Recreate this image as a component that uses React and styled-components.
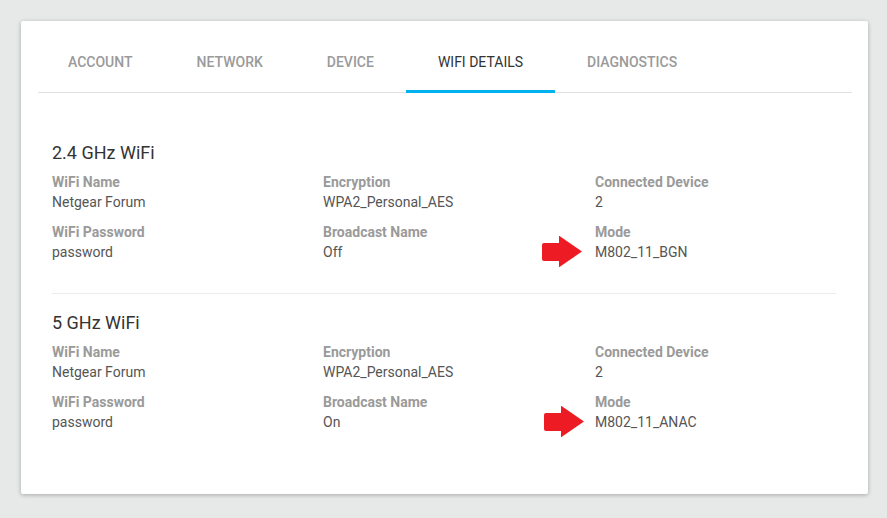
import styled, { createGlobalStyle } from "styled-components"

const GlobalStyle = createGlobalStyle`
    html, body {
        margin: 0;
        padding: 0;
        background-color: #e7e9e8;
        font-family: Roboto, "Liberation Sans", sans-serif;
    }
`

const tabs = ['ACCOUNT', 'NETWORK', 'DEVICE', 'WIFI DETAILS', 'DIAGNOSTICS']

const sections = [
    {
        title: '2.4 GHz WiFi',
        rows: [
            [['WiFi Name', 'Netgear Forum'], ['Encryption', 'WPA2_Personal_AES'], ['Connected Device', '2']],
            [['WiFi Password', 'password'], ['Broadcast Name', 'Off'], ['Mode', 'M802_11_BGN', 0]],
        ],
    },
    {
        title: '5 GHz WiFi',
        rows: [
            [['WiFi Name', 'Netgear Forum'], ['Encryption', 'WPA2_Personal_AES'], ['Connected Device', '2']],
            [['WiFi Password', 'password'], ['Broadcast Name', 'On'], ['Mode', 'M802_11_ANAC', 2]],
        ],
    },
]

function Arrow({ shift }) {
    return (
        <SCArrow $shift={shift} width="41" height="32" viewBox="0 0 41 32">
            <rect x="0" y="7" width="19" height="18" rx="2" fill="#ed1c24" />
            <polygon points="17,0 17.5,0 40,15.5 17.5,31 17,31" fill="#ed1c24" />
        </SCArrow>
    )
}

export default function App() {
    return (
        <>
            <GlobalStyle />
            <SCCard>
                <SCTabBar>
                    {tabs.map((t) => (
                        <SCTab key={t} $active={t === 'WIFI DETAILS'}>{t}</SCTab>
                    ))}
                </SCTabBar>
                <SCContent>
                    {sections.map((s) => (
                        <SCSection key={s.title}>
                            <SCTitle>{s.title}</SCTitle>
                            <SCGrid>
                                {s.rows.flat().map(([label, value, arrow]) => (
                                    <SCField key={label}>
                                        <SCLabel>{label}</SCLabel>
                                        <SCValue>
                                            {arrow !== undefined && <Arrow shift={arrow} />}
                                            {value}
                                        </SCValue>
                                    </SCField>
                                ))}
                            </SCGrid>
                        </SCSection>
                    ))}
                </SCContent>
            </SCCard>
        </>
    )
}

const SCCard = styled.div`
    margin: 21px 19px 24px 21px;
    padding: 17px 16px 17px 17px;

    background-color: #ffffff;
    border-radius: 2px;
    box-shadow: 0 1px 4px rgba(0, 0, 0, 0.28);
`

const SCTabBar = styled.div`
    display: flex;
    height: 54px;
    padding-left: 0;

    border-bottom: 1px solid #e0e0e0;
`

const SCTab = styled.div`
    box-sizing: border-box;
    height: 55px;
    margin-bottom: -1px;
    padding: 16px 32px 0 32px;

    &:first-child {
        margin-left: -2px;
    }

    font-size: 14px;
    line-height: 17px;
    font-weight: ${(p) => (p.$active ? 400 : 500)};
    color: ${(p) => (p.$active ? '#333333' : '#9a9a9a')};

    border-bottom: 3px solid ${(p) => (p.$active ? '#00b2ef' : 'transparent')};
`

const SCContent = styled.div`
    padding: 31px 16px 14px 14px;
`

const SCSection = styled.div`
    padding: 17px 0 31px 0;

    & + & {
        border-top: 1px solid #ececec;
    }
`

const SCTitle = styled.h2`
    margin: 0 0 7px 0;

    font-size: 18px;
    line-height: 24px;
    font-weight: 400;
    color: #333333;
`

const SCGrid = styled.div`
    display: grid;
    grid-template-columns: 271px 272px 1fr;
    row-gap: 10px;
`

const SCField = styled.div`
    display: flex;
    flex-direction: column;
`

const SCLabel = styled.div`
    font-size: 14px;
    line-height: 20px;
    font-weight: 700;
    color: #9a9a9a;
`

const SCValue = styled.div`
    position: relative;

    font-size: 14px;
    line-height: 20px;
    color: #555555;
`

const SCArrow = styled.svg`
    position: absolute;
    top: -6px;
    left: ${(p) => -53 + p.$shift}px;
`
